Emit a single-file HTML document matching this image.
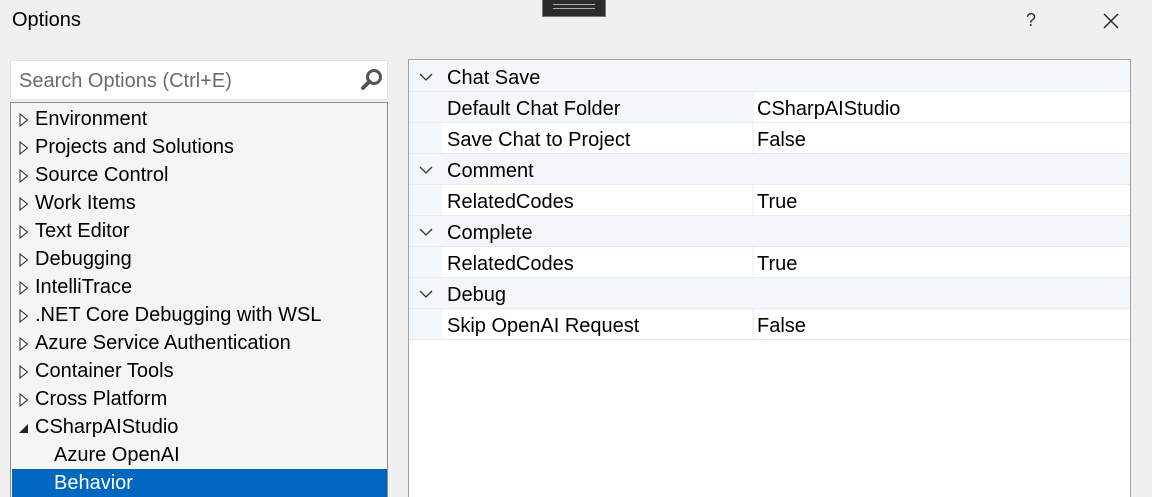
<!DOCTYPE html>
<html><head><style>
*{margin:0;padding:0;box-sizing:border-box}
html{width:1152px;height:497px;overflow:hidden}
body{width:1152px;height:497px;background:#f0f0f0;font-family:"Liberation Sans",sans-serif;font-size:20px;color:#000;position:relative;overflow:hidden}
.abs{position:absolute}
.title{left:12px;top:9px;font-size:20px}
.grip{left:542px;top:-2px;width:64px;height:19px;background:#2b2b2b;border:1px solid #777}
.grip:after{content:"";position:absolute;left:10px;top:5px;width:42px;height:3px;border-top:1px solid #aaa;border-bottom:1px solid #aaa}
.search{left:10px;top:60px;width:378px;height:40px;background:#fff;border:1px solid #dfe3ea;color:#6b6b6b;font-size:20px;padding:9px 0 0 8px}
.tree{left:10px;top:102px;width:378px;height:395px;background:#f5f5f5;border:1px solid #8e8e8e;border-bottom:none;overflow:hidden}
.ti{position:absolute;left:0;width:376px;height:28px;line-height:29px}
.ti span{position:absolute;left:24px}
.tri{position:absolute;left:8px;top:8px}
.sel{background:#0067c0;color:#fff}
.grid{left:408px;top:59px;width:723px;height:438px;background:#fff;border:1px solid #a0a0a0;border-bottom:none;overflow:hidden}
.row{position:absolute;left:0;width:721px;height:31px;line-height:34px;border-bottom:1px solid #e6ebf3}
.cat{background:#f3f6fb}
.cat .chev{position:absolute;left:10px;top:11px}
.cat span{position:absolute;left:38px}
.prop{background:#f3f6fb}
.prop .n{position:absolute;left:33px;top:0;width:310px;height:30px;background:#fff;padding-left:5px}
.prop .v{position:absolute;left:345px;top:0;width:376px;height:30px;background:#fff;padding-left:3px}
.prop .n.blue{background:#f3f6fb}
</style></head><body>
<div class="abs title">Options</div>
<div class="abs grip"></div>
<div class="abs" style="left:1026px;top:10px;font-size:18px;color:#333">?</div>
<svg class="abs" style="left:1103px;top:13px" width="16" height="16"><path d="M1 1L15 15M15 1L1 15" stroke="#222" stroke-width="1.4"/></svg>
<div class="abs search">Search Options (Ctrl+E)
<svg style="position:absolute;left:349px;top:7px" width="24" height="24"><circle cx="14" cy="9" r="6.5" fill="none" stroke="#555" stroke-width="3"/><path d="M9.5 13.5L3 20" stroke="#555" stroke-width="4" stroke-linecap="round"/></svg></div>
<div class="abs tree">
<div class="ti" style="top:2px"><svg class="tri" width="10" height="14"><path d="M1 1L8.5 7L1 13Z" fill="none" stroke="#222"/></svg><span>Environment</span></div>
<div class="ti" style="top:30px"><svg class="tri" width="10" height="14"><path d="M1 1L8.5 7L1 13Z" fill="none" stroke="#222"/></svg><span>Projects and Solutions</span></div>
<div class="ti" style="top:58px"><svg class="tri" width="10" height="14"><path d="M1 1L8.5 7L1 13Z" fill="none" stroke="#222"/></svg><span>Source Control</span></div>
<div class="ti" style="top:86px"><svg class="tri" width="10" height="14"><path d="M1 1L8.5 7L1 13Z" fill="none" stroke="#222"/></svg><span>Work Items</span></div>
<div class="ti" style="top:114px"><svg class="tri" width="10" height="14"><path d="M1 1L8.5 7L1 13Z" fill="none" stroke="#222"/></svg><span>Text Editor</span></div>
<div class="ti" style="top:142px"><svg class="tri" width="10" height="14"><path d="M1 1L8.5 7L1 13Z" fill="none" stroke="#222"/></svg><span>Debugging</span></div>
<div class="ti" style="top:170px"><svg class="tri" width="10" height="14"><path d="M1 1L8.5 7L1 13Z" fill="none" stroke="#222"/></svg><span>IntelliTrace</span></div>
<div class="ti" style="top:198px"><svg class="tri" width="10" height="14"><path d="M1 1L8.5 7L1 13Z" fill="none" stroke="#222"/></svg><span>.NET Core Debugging with WSL</span></div>
<div class="ti" style="top:226px"><svg class="tri" width="10" height="14"><path d="M1 1L8.5 7L1 13Z" fill="none" stroke="#222"/></svg><span>Azure Service Authentication</span></div>
<div class="ti" style="top:254px"><svg class="tri" width="10" height="14"><path d="M1 1L8.5 7L1 13Z" fill="none" stroke="#222"/></svg><span>Container Tools</span></div>
<div class="ti" style="top:282px"><svg class="tri" width="10" height="14"><path d="M1 1L8.5 7L1 13Z" fill="none" stroke="#222"/></svg><span>Cross Platform</span></div>
<div class="ti" style="top:310px"><svg class="tri" width="10" height="14"><path d="M9 3L9 12L0 12Z" fill="#222"/></svg><span>CSharpAIStudio</span></div>
<div class="ti" style="top:338px"><span style="left:43px">Azure OpenAI</span></div>
<div class="ti sel" style="top:366px;left:1px;width:375px;height:30px"><span style="left:42px">Behavior</span></div>
</div>
<div class="abs grid">
<div class="row cat" style="top:1px"><svg class="chev" width="14" height="10"><path d="M1 2L7 8L13 2" fill="none" stroke="#333" stroke-width="1.3"/></svg><span>Chat Save</span></div>
<div class="row prop" style="top:32px"><div class="n blue">Default Chat Folder</div><div class="v">CSharpAIStudio</div></div>
<div class="row prop" style="top:63px"><div class="n">Save Chat to Project</div><div class="v">False</div></div>
<div class="row cat" style="top:94px"><svg class="chev" width="14" height="10"><path d="M1 2L7 8L13 2" fill="none" stroke="#333" stroke-width="1.3"/></svg><span>Comment</span></div>
<div class="row prop" style="top:125px"><div class="n">RelatedCodes</div><div class="v">True</div></div>
<div class="row cat" style="top:156px"><svg class="chev" width="14" height="10"><path d="M1 2L7 8L13 2" fill="none" stroke="#333" stroke-width="1.3"/></svg><span>Complete</span></div>
<div class="row prop" style="top:187px"><div class="n">RelatedCodes</div><div class="v">True</div></div>
<div class="row cat" style="top:218px"><svg class="chev" width="14" height="10"><path d="M1 2L7 8L13 2" fill="none" stroke="#333" stroke-width="1.3"/></svg><span>Debug</span></div>
<div class="row prop" style="top:249px"><div class="n">Skip OpenAI Request</div><div class="v">False</div></div>
</div>
</body></html>
